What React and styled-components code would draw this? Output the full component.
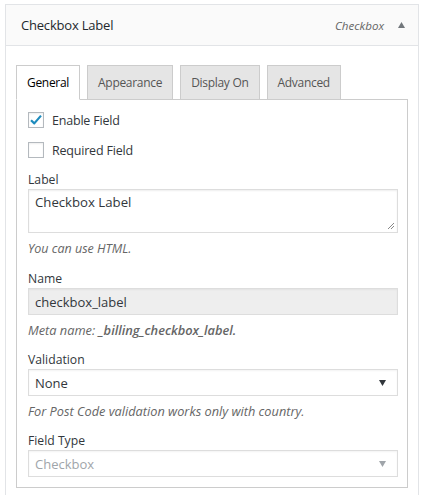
import React from "react";
import styled, { createGlobalStyle } from "styled-components";

const Global = createGlobalStyle`
  html, body { margin: 0; padding: 0; background: #fff; }
  body { font-family: "Open Sans", "Noto Sans", sans-serif; color: #32373c; }
  * { box-sizing: border-box; }
`;

const Page = styled.div`
  padding: 4px 5px 0 5px;
`;

const Box = styled.div`
  border: 1px solid #e2e4e7;
  border-bottom: none;
  background: #fff;
  height: 491px;
`;

const Header = styled.div`
  height: 41px;
  background: #fafafa;
  border-bottom: 1px solid #e2e4e7;
  display: flex;
  align-items: center;
  padding: 0 13px 0 15px;
`;

const Title = styled.div`
  flex: 1;
  font-size: 13px;
  letter-spacing: -0.2px;
  color: #23282d;
`;

const TypeName = styled.div`
  font-size: 11.6px;
  font-style: italic;
  color: #666;
  margin-right: 14px;
`;

const Body = styled.div`
  padding: 19px 10px 0 10px;
`;

const TabRow = styled.div`
  display: flex;
  gap: 7px;
  position: relative;
  z-index: 1;
  margin-bottom: -1px;
`;

const Tab = styled.div`
  height: 35px;
  padding: 0 10px;
  display: flex;
  align-items: center;
  font-size: 12px;
  letter-spacing: -0.3px;
  border: 1px solid #ccc;
  border-bottom: ${(p) => (p.$active ? "1px solid #fff" : "1px solid #ccc")};
  background: ${(p) => (p.$active ? "#fff" : "#e5e5e5")};
  color: ${(p) => (p.$active ? "#000" : "#555")};
`;

const Panel = styled.div`
  border: 1px solid #ccc;
  padding: 12px 9px 10px 11px;
`;

const CheckRow = styled.label`
  display: flex;
  align-items: center;
  height: 16px;
  margin-bottom: ${(p) => p.$mb ?? 14}px;
  font-size: 12.5px;
  letter-spacing: -0.2px;
  color: #32373c;
`;

const CheckBox = styled.span`
  width: 16px;
  height: 16px;
  border: 1px solid #b4b9be;
  background: #fff;
  box-shadow: inset 0 1px 2px rgba(0, 0, 0, 0.07);
  margin-right: 8px;
  display: flex;
  align-items: center;
  justify-content: center;
`;

const FieldLabel = styled.div`
  font-size: 12.2px;
  line-height: 18px;
  color: #32373c;
`;

const TextArea = styled.div`
  height: 44px;
  border: 1px solid #ddd;
  box-shadow: inset 0 1px 2px rgba(0, 0, 0, 0.07);
  padding: 1px 6px;
  font-size: 13.2px;
  line-height: 22px;
  color: #32373c;
  position: relative;
`;

const Grip = styled.svg`
  position: absolute;
  right: 2px;
  bottom: 2px;
`;

const Input = styled.div`
  height: 27px;
  border: 1px solid #ddd;
  background: ${(p) => (p.$readonly ? "#eee" : "#fff")};
  display: flex;
  align-items: center;
  padding: 0 6px 0 6px;
  font-size: 13px;
  color: ${(p) => (p.$disabled ? "#a0a5aa" : "#32373c")};
  box-shadow: inset 0 1px 2px rgba(0, 0, 0, 0.05);
`;

const SelectText = styled.span`
  flex: 1;
`;

const Desc = styled.div`
  font-size: ${(p) => p.$fs || 12.5}px;
  font-style: italic;
  line-height: 18px;
  color: #666;
  margin-top: ${(p) => p.$mt || 5}px;
  margin-bottom: 12px;
  strong { font-weight: 600; }
`;

const Group = styled.div``;

const Arrow = ({ color = "#32373c", up }) => (
  <svg width="7" height="6" viewBox="0 0 7 6" style={{ marginRight: up ? 0 : 5 }}>
    <path d={up ? "M0 6 L3.5 0 L7 6 Z" : "M0 0 L7 0 L3.5 6 Z"} fill={color} />
  </svg>
);

const Check = () => (
  <svg width="14" height="14" viewBox="0 0 14 14">
    <path d="M2 7.2 L5.3 10.4 L12 2.6" stroke="#1e8cbe" strokeWidth="2.2" fill="none" strokeLinejoin="round" />
  </svg>
);

export default function App() {
  return (
    <>
      <Global />
      <Page>
        <Box>
          <Header>
            <Title>Checkbox Label</Title>
            <TypeName>Checkbox</TypeName>
            <Arrow up color="#72777c" />
          </Header>
          <Body>
            <TabRow>
              <Tab $active>General</Tab>
              <Tab>Appearance</Tab>
              <Tab>Display On</Tab>
              <Tab>Advanced</Tab>
            </TabRow>
            <Panel>
              <CheckRow>
                <CheckBox><Check /></CheckBox>
                Enable Field
              </CheckRow>
              <CheckRow $mb={13}>
                <CheckBox />
                Required Field
              </CheckRow>
              <Group>
                <FieldLabel>Label</FieldLabel>
                <TextArea>
                  Checkbox Label
                  <Grip width="8" height="8" viewBox="0 0 8 8">
                    <path d="M7 1 L1 7 M7 4 L4 7" stroke="#888" strokeWidth="1" />
                  </Grip>
                </TextArea>
                <Desc $mt={7}>You can use HTML.</Desc>
              </Group>
              <Group>
                <FieldLabel>Name</FieldLabel>
                <Input $readonly>checkbox_label</Input>
                <Desc $mt={6} $fs={12.8}>Meta name: <strong>_billing_checkbox_label.</strong></Desc>
              </Group>
              <Group>
                <FieldLabel>Validation</FieldLabel>
                <Input>
                  <SelectText>None</SelectText>
                  <Arrow />
                </Input>
                <Desc $mt={6} $fs={12.75}>For Post Code validation works only with country.</Desc>
              </Group>
              <Group>
                <FieldLabel>Field Type</FieldLabel>
                <Input $disabled>
                  <SelectText>Checkbox</SelectText>
                  <Arrow color="#a0a5aa" />
                </Input>
              </Group>
            </Panel>
          </Body>
        </Box>
      </Page>
    </>
  );
}
